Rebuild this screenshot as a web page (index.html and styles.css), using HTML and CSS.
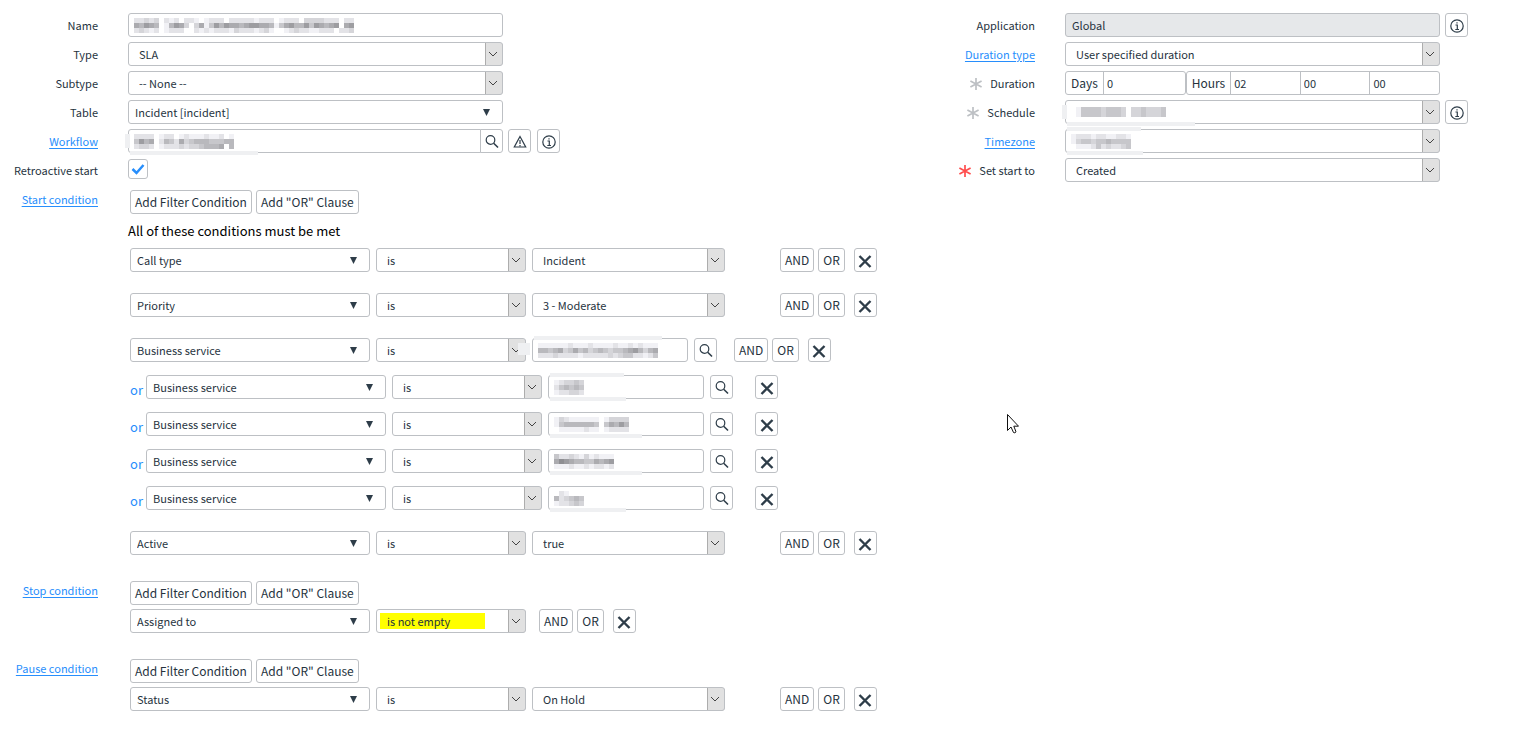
FILE: index.html
```html
<!DOCTYPE html>
<html lang="en">
<head>
    <meta charset="UTF-8">
    <meta name="viewport" content="width=device-width, initial-scale=1.0">
    <title>SLA Definition</title>
    <link rel="stylesheet" href="styles.css">
</head>
<body>
    <!-- shared icons -->
    <svg class="sprite" aria-hidden="true">
        <symbol id="i-search" viewBox="0 0 16 16"><circle cx="6.5" cy="7" r="4.3"/><path d="M9.700 10.200L14 14.500" stroke-width="1.6"/></symbol>
        <symbol id="i-info" viewBox="0 0 16 16"><circle cx="8" cy="9" r="6.2"/><path d="M6.5 8H8.3V12.5M6.3 12.5H10M8 5.2V6.4"/></symbol>
        <symbol id="i-warn" viewBox="0 0 16 16"><path d="M8 3.5L13.7 14H2.3ZM8 7V11M8 12V13.3"/></symbol>
        <symbol id="i-close" viewBox="0 0 16 16"><path d="M2.500 4L13.500 15M13.500 4L2.500 15" stroke-width="2.4"/></symbol>
        <symbol id="i-star" viewBox="0 0 16 16"><path d="M8 2V14M2.4 5L13.6 11M13.6 5L2.4 11" stroke-width="1.7"/></symbol>
    </svg>

    <form class="page">
        <div class="column">
            <div class="field">
                <label class="label" for="name">Name</label>
                <div class="control">
                    <div class="masked grow">
                        <input class="box" id="name" type="text">
                        <canvas class="mosaic" data-rows="22323.212.221.1222.222221222.1222.3333222.22|65765.15763.36147576656776651467557476567.676|23212.1222..2121222132221231..1232211222.223"></canvas>
                    </div>
                </div>
            </div>
            <div class="field">
                <label class="label" for="type">Type</label>
                <div class="control"><select class="box native grow" id="type"><option>SLA</option></select></div>
            </div>
            <div class="field">
                <label class="label" for="subtype">Subtype</label>
                <div class="control"><select class="box native grow" id="subtype"><option>-- None --</option></select></div>
            </div>
            <div class="field">
                <label class="label" for="table">Table</label>
                <div class="control"><select class="box picker grow" id="table"><option>Incident [incident]</option></select></div>
            </div>
            <div class="field">
                <label class="label" for="workflow"><a href="#workflow">Workflow</a></label>
                <div class="control">
                    <div class="masked grow joined">
                        <input class="box" id="workflow" type="text">
                        <span class="smear smear-left"></span>
                        <span class="smear smear-bottom wide"></span>
                        <canvas class="mosaic" data-rows="2222.122.121112112.1|4756.254263455544455|2332.1222323345556.5"></canvas>
                    </div>
                    <button class="btn icon joined-btn" type="button" aria-label="Lookup workflow"><svg><use href="#i-search"/></svg></button>
                    <button class="btn icon outside" type="button" aria-label="Warning"><svg><use href="#i-warn"/></svg></button>
                    <button class="btn icon outside" type="button" aria-label="Workflow info"><svg><use href="#i-info"/></svg></button>
                </div>
            </div>
            <div class="field">
                <label class="label" for="retro">Retroactive start</label>
                <div class="control"><input class="check" id="retro" type="checkbox" checked></div>
            </div>

            <section class="conditions start">
                <div class="label"><a href="#start">Start condition</a></div>
                <div class="builder" id="start">
                    <div class="toolbar">
                        <button class="btn" type="button">Add Filter Condition</button>
                        <button class="btn" type="button">Add "OR" Clause</button>
                    </div>
                    <p class="hint">All of these conditions must be met</p>

                    <div class="row">
                        <select class="box picker what" aria-label="Field"><option>Call type</option></select>
                        <select class="box native oper" aria-label="Operator"><option>is</option></select>
                        <select class="box native value" aria-label="Value"><option>Incident</option></select>
                        <div class="actions far">
                            <button class="btn" type="button">AND</button>
                            <button class="btn" type="button">OR</button>
                            <button class="btn icon remove" type="button" aria-label="Remove"><svg><use href="#i-close"/></svg></button>
                        </div>
                    </div>

                    <div class="row group">
                        <select class="box picker what" aria-label="Field"><option>Priority</option></select>
                        <select class="box native oper" aria-label="Operator"><option>is</option></select>
                        <select class="box native value" aria-label="Value"><option>3 - Moderate</option></select>
                        <div class="actions far">
                            <button class="btn" type="button">AND</button>
                            <button class="btn" type="button">OR</button>
                            <button class="btn icon remove" type="button" aria-label="Remove"><svg><use href="#i-close"/></svg></button>
                        </div>
                    </div>

                    <div class="row group">
                        <select class="box picker what" aria-label="Field"><option>Business service</option></select>
                        <select class="box native oper" aria-label="Operator"><option>is</option></select>
                        <div class="masked lookup">
                            <input class="box" type="text" aria-label="Value">
                            <span class="smear smear-left far-left"></span>
                            <span class="smear smear-top wide"></span>
                            <canvas class="mosaic" data-rows="111111211121111211212111|554563464534543445675356|222322221222223234422124"></canvas>
                        </div>
                        <button class="btn icon" type="button" aria-label="Lookup"><svg><use href="#i-search"/></svg></button>
                        <div class="actions mid">
                            <button class="btn" type="button">AND</button>
                            <button class="btn" type="button">OR</button>
                            <button class="btn icon remove" type="button" aria-label="Remove"><svg><use href="#i-close"/></svg></button>
                        </div>
                    </div>

                    <div class="row sub">
                        <span class="or">or</span>
                        <select class="box picker what" aria-label="Field"><option>Business service</option></select>
                        <select class="box native oper" aria-label="Operator"><option>is</option></select>
                        <div class="masked lookup">
                            <input class="box" type="text" aria-label="Value">
                            <span class="smear smear-top"></span>
                            <span class="smear smear-bottom"></span>
                            <canvas class="mosaic" data-rows="123343|245454|122332"></canvas>
                        </div>
                        <button class="btn icon" type="button" aria-label="Lookup"><svg><use href="#i-search"/></svg></button>
                        <div class="actions near">
                            <button class="btn icon" type="button" aria-label="Remove"><svg><use href="#i-close"/></svg></button>
                        </div>
                    </div>

                    <div class="row sub">
                        <span class="or">or</span>
                        <select class="box picker what" aria-label="Field"><option>Business service</option></select>
                        <select class="box native oper" aria-label="Operator"><option>is</option></select>
                        <div class="masked lookup">
                            <input class="box" type="text" aria-label="Value">
                            <span class="smear smear-bottom mid-wide"></span>
                            <canvas class="mosaic" data-rows="132111111.13333|145555554.46575|.11111211.12222"></canvas>
                        </div>
                        <button class="btn icon" type="button" aria-label="Lookup"><svg><use href="#i-search"/></svg></button>
                        <div class="actions near">
                            <button class="btn icon" type="button" aria-label="Remove"><svg><use href="#i-close"/></svg></button>
                        </div>
                    </div>

                    <div class="row sub">
                        <span class="or">or</span>
                        <select class="box picker what" aria-label="Field"><option>Business service</option></select>
                        <select class="box native oper" aria-label="Operator"><option>is</option></select>
                        <div class="masked lookup">
                            <input class="box" type="text" aria-label="Value">
                            <span class="smear smear-bottom mid-wide"></span>
                            <canvas class="mosaic" data-rows="422321312111|687655446567|111211212212"></canvas>
                        </div>
                        <button class="btn icon" type="button" aria-label="Lookup"><svg><use href="#i-search"/></svg></button>
                        <div class="actions near">
                            <button class="btn icon" type="button" aria-label="Remove"><svg><use href="#i-close"/></svg></button>
                        </div>
                    </div>

                    <div class="row sub">
                        <span class="or">or</span>
                        <select class="box picker what" aria-label="Field"><option>Business service</option></select>
                        <select class="box native oper" aria-label="Operator"><option>is</option></select>
                        <div class="masked lookup">
                            <input class="box" type="text" aria-label="Value">
                            <span class="smear smear-bottom"></span>
                            <canvas class="mosaic" data-rows=".21...|523454|122343"></canvas>
                        </div>
                        <button class="btn icon" type="button" aria-label="Lookup"><svg><use href="#i-search"/></svg></button>
                        <div class="actions near">
                            <button class="btn icon" type="button" aria-label="Remove"><svg><use href="#i-close"/></svg></button>
                        </div>
                    </div>

                    <div class="row group">
                        <select class="box picker what" aria-label="Field"><option>Active</option></select>
                        <select class="box native oper" aria-label="Operator"><option>is</option></select>
                        <select class="box native value" aria-label="Value"><option>true</option></select>
                        <div class="actions far">
                            <button class="btn" type="button">AND</button>
                            <button class="btn" type="button">OR</button>
                            <button class="btn icon remove" type="button" aria-label="Remove"><svg><use href="#i-close"/></svg></button>
                        </div>
                    </div>
                </div>
            </section>

            <section class="conditions">
                <div class="label"><a href="#stop">Stop condition</a></div>
                <div class="builder" id="stop">
                    <div class="toolbar">
                        <button class="btn" type="button">Add Filter Condition</button>
                        <button class="btn" type="button">Add "OR" Clause</button>
                    </div>
                    <div class="row">
                        <select class="box picker what" aria-label="Field"><option>Assigned to</option></select>
                        <select class="box native oper marked" aria-label="Operator"><option>is not empty</option></select>
                        <div class="actions close">
                            <button class="btn" type="button">AND</button>
                            <button class="btn" type="button">OR</button>
                            <button class="btn icon remove" type="button" aria-label="Remove"><svg><use href="#i-close"/></svg></button>
                        </div>
                    </div>
                </div>
            </section>

            <section class="conditions">
                <div class="label"><a href="#pause">Pause condition</a></div>
                <div class="builder" id="pause">
                    <div class="toolbar">
                        <button class="btn" type="button">Add Filter Condition</button>
                        <button class="btn" type="button">Add "OR" Clause</button>
                    </div>
                    <div class="row">
                        <select class="box picker what" aria-label="Field"><option>Status</option></select>
                        <select class="box native oper" aria-label="Operator"><option>is</option></select>
                        <select class="box native value" aria-label="Value"><option>On Hold</option></select>
                        <div class="actions far">
                            <button class="btn" type="button">AND</button>
                            <button class="btn" type="button">OR</button>
                            <button class="btn icon remove" type="button" aria-label="Remove"><svg><use href="#i-close"/></svg></button>
                        </div>
                    </div>
                </div>
            </section>
        </div>

        <div class="column">
            <div class="field">
                <label class="label" for="application">Application</label>
                <div class="control">
                    <input class="box grow" id="application" type="text" value="Global" readonly>
                    <button class="btn icon outside" type="button" aria-label="Application info"><svg><use href="#i-info"/></svg></button>
                </div>
            </div>
            <div class="field">
                <label class="label" for="duration-type"><a href="#duration-type">Duration type</a></label>
                <div class="control"><select class="box native grow" id="duration-type"><option>User specified duration</option></select></div>
            </div>
            <div class="field">
                <label class="label" for="days"><svg class="star"><use href="#i-star"/></svg>Duration</label>
                <div class="control">
                    <div class="unit days">
                        <label for="days">Days</label>
                        <input id="days" type="text" value="0">
                    </div>
                    <div class="unit hours">
                        <label for="hours">Hours</label>
                        <input id="hours" type="text" value="02">
                        <input type="text" value="00" aria-label="Minutes">
                        <input type="text" value="00" aria-label="Seconds">
                    </div>
                </div>
            </div>
            <div class="field">
                <label class="label" for="schedule"><svg class="star"><use href="#i-star"/></svg>Schedule</label>
                <div class="control">
                    <div class="masked grow">
                        <select class="box native" id="schedule"><option></option></select>
                        <span class="smear smear-left"></span>
                        <span class="smear smear-bottom wide"></span>
                        <canvas class="mosaic low" data-rows=".1444434443.3343334|.1444434443.3343334"></canvas>
                    </div>
                    <button class="btn icon outside" type="button" aria-label="Schedule info"><svg><use href="#i-info"/></svg></button>
                </div>
            </div>
            <div class="field">
                <label class="label" for="timezone"><a href="#timezone">Timezone</a></label>
                <div class="control">
                    <div class="masked grow">
                        <select class="box native" id="timezone"><option></option></select>
                        <span class="smear smear-top"></span>
                        <span class="smear smear-bottom"></span>
                        <canvas class="mosaic" data-rows="122212211221|134434454444|.11124232234"></canvas>
                    </div>
                </div>
            </div>
            <div class="field">
                <label class="label" for="start-to"><svg class="star required"><use href="#i-star"/></svg>Set start to</label>
                <div class="control"><select class="box native grow" id="start-to"><option>Created</option></select></div>
            </div>
        </div>
    </form>

    <svg class="cursor" viewBox="0 0 12 20" aria-hidden="true"><path d="M.5 .5V16.5L4 13L6.5 18.5Q8 19.5 9 17.8L6.8 12.2H11.5Z"/></svg>

    <script>
        // paint the masked values, one digit per 5px cell
        document.querySelectorAll('.mosaic').forEach(function(canvas) {
            const rows = canvas.dataset.rows.split('|');
            const cell = 5;
            canvas.width = rows[0].length * cell;
            canvas.height = rows.length * cell;
            const ctx = canvas.getContext('2d');
            rows.forEach(function(row, y) {
                for (let x = 0; x < row.length; x++) {
                    const shade = 255 - (Number(row[x]) || 0) * 14;
                    ctx.fillStyle = 'rgb(' + shade + ',' + shade + ',' + Math.min(255, shade + 4) + ')';
                    ctx.fillRect(x * cell, y * cell, cell, cell);
                }
            });
        });
    </script>
</body>
</html>
```
FILE: styles.css
```css
* {
    box-sizing: border-box;
}
body {
    margin: 0;
    background: #fff;
    color: #26333e;
    font-family: "Noto Sans CJK SC", "Noto Sans", sans-serif;
    font-size: 11px;
    line-height: 24px;
}
input, select, button {
    margin: 0;
    font: inherit;
    color: inherit;
}
a {
    color: #278efc;
    text-underline-offset: 2px;
}
.sprite {
    display: none;
}
.page {
    display: grid;
    grid-template-columns: 937fr 597fr;
    padding: 13px 0;
}
.column {
    min-width: 0;
}

/* form fields */
.field {
    display: flex;
    gap: 30px;
    margin-bottom: 5px;
}
.label {
    flex: none;
    width: 98px;
    height: 24px;
    text-align: right;
    white-space: nowrap;
}
.control {
    display: flex;
    flex: 1;
    min-width: 0;
    max-width: 375px;
    height: 24px;
}
.grow {
    flex: 1;
    min-width: 0;
}
.box {
    height: 24px;
    padding: 0 6px 1px;
    border: 1px solid #bdc0c4;
    border-radius: 3px;
    background-color: #fff;
    line-height: 20px;
    outline: none;
}
.box[readonly] {
    background-color: #e6e8ea;
}
select.box {
    appearance: none;
}
.native {
    padding-left: 10px;
    background: #fff url("data:image/svg+xml,%3Csvg xmlns='http://www.w3.org/2000/svg' width='18' height='24'%3E%3Crect x='.5' y='.5' width='17' height='23' fill='%23e1e1e1' stroke='%23adadad'/%3E%3Cpath d='M4 10l4 4 4-4' fill='none' stroke='%23444'/%3E%3C/svg%3E") right center no-repeat;
    background-origin: border-box;
}
.picker {
    background: #fff url("data:image/svg+xml,%3Csvg xmlns='http://www.w3.org/2000/svg' width='8' height='8'%3E%3Cpath d='M0 1h7L3.500 8z' fill='%232e3d49'/%3E%3C/svg%3E") right 11px center no-repeat;
}
.btn {
    flex: none;
    height: 24px;
    padding: 0 4px;
    border: 1px solid #bdc0c4;
    border-radius: 3px;
    background: #fff;
    font-size: 12px;
    line-height: 20px;
    white-space: nowrap;
}
.icon {
    display: flex;
    align-items: center;
    justify-content: center;
    width: 23px;
    padding: 0;
}
.icon svg, .star {
    width: 16px;
    height: 16px;
    fill: none;
    stroke: #2e3d49;
    stroke-width: 1.2;
}
.star {
    margin-right: 6px;
    vertical-align: -4px;
    stroke: #bdc0c4;
}
.star.required {
    stroke: #ff4d4d;
}
/* buttons that hang past the end of the field */
.outside {
    margin: 0 -28px 0 5px;
}
.outside + .outside {
    margin: 0 -57px 0 34px;
}
.joined .box {
    border-radius: 3px 0 0 3px;
}
.joined-btn {
    margin-left: -1px;
    border-radius: 0 3px 3px 0;
}
.check {
    appearance: none;
    width: 20px;
    height: 20px;
    margin-top: 1px;
    border: 1px solid #bdc0c4;
    border-radius: 3px;
    background: url("data:image/svg+xml,%3Csvg xmlns='http://www.w3.org/2000/svg' width='14' height='12'%3E%3Cpath d='M1.500 6l4 4L12.500 2' fill='none' stroke='%23278efc' stroke-width='2.500'/%3E%3C/svg%3E") center no-repeat;
}

/* duration */
.unit {
    display: flex;
    min-width: 0;
    border: 1px solid #bdc0c4;
    border-radius: 3px;
    line-height: 22px;
}
.days {
    flex: 120;
}
.hours {
    flex: 255;
}
.unit label {
    padding: 0 5px;
    font-size: 12px;
}
.unit input {
    flex: 1;
    width: 0;
    min-width: 0;
    padding: 0 3px;
    border: 0;
    border-left: 1px solid #bdc0c4;
    background: none;
    line-height: 20px;
    outline: none;
}

/* masked values */
.masked {
    position: relative;
}
.masked .box {
    display: block;
    width: 100%;
}
.mosaic {
    position: absolute;
    top: 5px;
    left: 6px;
}
.mosaic.low {
    top: 7px;
}
.smear {
    position: absolute;
    background: #eff0f2;
}
.smear-left {
    top: 5px;
    left: -3px;
    width: 5px;
    height: 14px;
}
.smear-left.far-left {
    left: -14px;
    width: 12px;
    height: 12px;
}
.smear-top {
    top: -2px;
    left: 2px;
    width: 74px;
    height: 4px;
}
.smear-bottom {
    bottom: -2px;
    left: 2px;
    width: 76px;
    height: 4px;
}
.smear.mid-wide {
    width: 92px;
}
.smear.wide {
    width: 128px;
}

/* condition builder */
.conditions {
    display: flex;
    gap: 32px;
    margin-top: 26px;
}
.conditions .label {
    margin-top: -3px;
}
.conditions.start {
    margin-top: 8px;
}
.toolbar {
    display: flex;
    gap: 4px;
    margin-bottom: 4px;
}
.hint {
    margin: 0 0 6px -2px;
    padding-top: 1px;
    color: #000;
    font-size: 13px;
    line-height: 23px;
}
.row {
    display: flex;
    gap: 6px;
    height: 24px;
}
.row.group {
    margin-top: 21px;
}
.row.sub {
    margin-top: 13px;
}
.or {
    width: 10px;
    padding-top: 3px;
    color: #278efc;
    font-size: 13px;
}
.what {
    width: 240px;
}
.oper {
    width: 150px;
}
.value {
    width: 193px;
}
.lookup {
    width: 156px;
}
.actions {
    display: flex;
    gap: 4px;
}
.actions.far {
    margin-left: 49px;
}
.actions.mid {
    margin-left: 11px;
}
.actions.near {
    margin-left: 16px;
}
.actions.close {
    margin-left: 7px;
}
.remove {
    margin-left: 5px;
}
.marked {
    background-image: url("data:image/svg+xml,%3Csvg xmlns='http://www.w3.org/2000/svg' width='18' height='24'%3E%3Crect x='.5' y='.5' width='17' height='23' fill='%23e1e1e1' stroke='%23adadad'/%3E%3Cpath d='M4 10l4 4 4-4' fill='none' stroke='%23444'/%3E%3C/svg%3E"), linear-gradient(#ff0, #ff0);
    background-position: right center, 4px center;
    background-size: auto, 105px 16px;
}

.cursor {
    position: absolute;
    top: 414px;
    left: 1007px;
    width: 12px;
    height: 20px;
    fill: #fff;
    stroke: #111;
}
```
